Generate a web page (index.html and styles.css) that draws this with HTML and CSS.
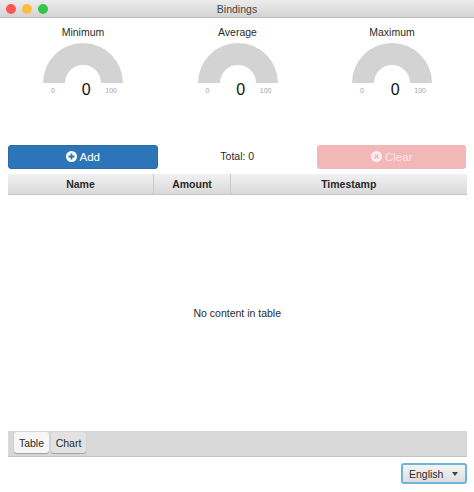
FILE: index.html
```html
<!DOCTYPE html>
<html>
<head>
    <link rel="stylesheet" href="styles.css">
</head>
<body>
    <div class="titlebar">
        <div class="lights">
            <span class="light red"></span>
            <span class="light yellow"></span>
            <span class="light green"></span>
        </div>
        <div class="window-title">Bindings</div>
    </div>

    <div class="gauges">
        <div class="gauge">
            <div class="gauge-title">Minimum</div>
            <svg class="arc" width="80" height="40" viewBox="0 0 80 40"><path d="M0 40A40 40 0 0 1 80 40H58A18 18 0 0 0 22 40Z"/></svg>
            <div class="gauge-values"><span class="tick">0</span><span class="value">0</span><span class="tick">100</span></div>
        </div>
        <div class="gauge">
            <div class="gauge-title">Average</div>
            <svg class="arc" width="80" height="40" viewBox="0 0 80 40"><path d="M0 40A40 40 0 0 1 80 40H58A18 18 0 0 0 22 40Z"/></svg>
            <div class="gauge-values"><span class="tick">0</span><span class="value">0</span><span class="tick">100</span></div>
        </div>
        <div class="gauge">
            <div class="gauge-title">Maximum</div>
            <svg class="arc" width="80" height="40" viewBox="0 0 80 40"><path d="M0 40A40 40 0 0 1 80 40H58A18 18 0 0 0 22 40Z"/></svg>
            <div class="gauge-values"><span class="tick">0</span><span class="value">0</span><span class="tick">100</span></div>
        </div>
    </div>

    <div class="actions">
        <button class="btn btn-add">
            <svg width="11" height="11" viewBox="0 0 11 11"><circle cx="5.5" cy="5.5" r="5.5" fill="#fff"/><path d="M5.5 2.5v6M2.5 5.5h6" stroke="#2d75b9" stroke-width="1.8"/></svg>
            Add
        </button>
        <div class="total">Total: 0</div>
        <button class="btn btn-clear">
            <svg width="11" height="11" viewBox="0 0 11 11"><circle cx="5.5" cy="5.5" r="5.5" fill="#fff" fill-opacity="0.75"/><path d="M3.5 3.5l4 4M7.5 3.5l-4 4" stroke="#f2b8b8" stroke-width="1.6"/></svg>
            Clear
        </button>
    </div>

    <div class="table">
        <div class="table-head">
            <div class="col col-name">Name</div>
            <div class="col col-amount">Amount</div>
            <div class="col col-time">Timestamp</div>
        </div>
        <div class="table-empty">No content in table</div>
    </div>

    <div class="tabbar">
        <div class="tab active">Table</div>
        <div class="tab">Chart</div>
    </div>

    <div class="footer">
        <div class="select">English <span class="caret"></span></div>
    </div>
</body>
</html>
```

FILE: styles.css
```css
* {
    margin: 0;
    padding: 0;
    box-sizing: border-box;
}

body {
    font-family: 'Liberation Sans', Arial, sans-serif;
    font-size: 10.5px;
    color: #2a2a2a;
    background-color: white;
    width: 474px;
    height: 492px;
    overflow: hidden;
    display: flex;
    flex-direction: column;
}

.titlebar {
    height: 18px;
    background: linear-gradient(#ececec, #d4d4d4);
    border-bottom: 1px solid #bdbdbd;
    display: flex;
    align-items: center;
    position: relative;
    padding-left: 6px;
}

.lights {
    display: flex;
    gap: 6px;
}

.light {
    width: 10px;
    height: 10px;
    border-radius: 50%;
}

.red { background-color: #fc5753; }
.yellow { background-color: #fdbc40; }
.green { background-color: #33c748; }

.window-title {
    position: absolute;
    left: 0;
    right: 0;
    text-align: center;
    color: #444;
}

.gauges {
    display: flex;
    height: 127px;
    padding: 8px 0 0 5.75px;
}

.gauge {
    width: 154.5px;
    display: flex;
    flex-direction: column;
    align-items: center;
}

.gauge-title {
    height: 17px;
    line-height: 13px;
}

.arc {
    fill: #d3d3d3;
    display: block;
}

.gauge-values {
    width: 80px;
    height: 14px;
    display: flex;
    align-items: center;
    justify-content: space-between;
    padding: 0 6px 0 8px;
}

.tick {
    font-size: 7px;
    color: #a3a3a3;
}

.value {
    font-size: 16px;
    color: #111;
    margin-left: 12px;
}

.actions {
    display: flex;
    align-items: flex-start;
    justify-content: space-between;
    padding: 0 7.5px 0 8px;
    height: 24px;
}

.total {
    line-height: 23px;
}

.btn {
    width: 149.5px;
    height: 23.5px;
    border: none;
    border-radius: 3px;
    font-family: inherit;
    font-size: 11.5px;
    color: white;
    display: flex;
    align-items: center;
    justify-content: center;
    gap: 3px;
}

.btn-add {
    background-color: #2d75b9;
    border: 1px solid #2a6aa8;
}

.btn-clear {
    background-color: #f2b8b8;
    color: #fbe6e6;
}

.table {
    flex: 1;
    margin: 5px 7.5px 0 8px;
    display: flex;
    flex-direction: column;
}

.table-head {
    display: flex;
    height: 21px;
    background: linear-gradient(#f1f1f1, #d9d9d9);
    border-bottom: 1px solid #c8c8c8;
    font-weight: bold;
}

.col {
    display: flex;
    align-items: center;
    justify-content: center;
    border-right: 1px solid #c8c8c8;
}

.col-name { width: 146px; }
.col-amount { width: 77px; }
.col-time { flex: 1; border-right: none; }

.table-empty {
    flex: 1;
    display: flex;
    align-items: center;
    justify-content: center;
}

.tabbar {
    height: 26px;
    margin: 0 7.5px 0 8px;
    padding: 1px 6px 0 6px;
    background-color: #d8d8d8;
    border-bottom: 1px solid #c4c4c4;
    display: flex;
    gap: 2px;
}

.tab {
    width: 35px;
    height: 21px;
    border-radius: 3px;
    background-color: #e2e2e2;
    box-shadow: 0 1px 1px rgba(0, 0, 0, 0.25);
    display: flex;
    align-items: center;
    justify-content: center;
}

.tab.active {
    background-color: #f6f6f6;
}

.footer {
    height: 35px;
    padding: 6px 7px 0 0;
    display: flex;
    justify-content: flex-end;
}

.select {
    width: 66px;
    height: 21px;
    border: 2px solid #6bb6da;
    border-radius: 3px;
    background: linear-gradient(#f4f4f4, #dedede);
    display: flex;
    align-items: center;
    justify-content: space-between;
    padding: 0 7px 0 6px;
}

.caret {
    width: 0;
    height: 0;
    border-left: 3px solid transparent;
    border-right: 3px solid transparent;
    border-top: 4px solid #444;
}
```
